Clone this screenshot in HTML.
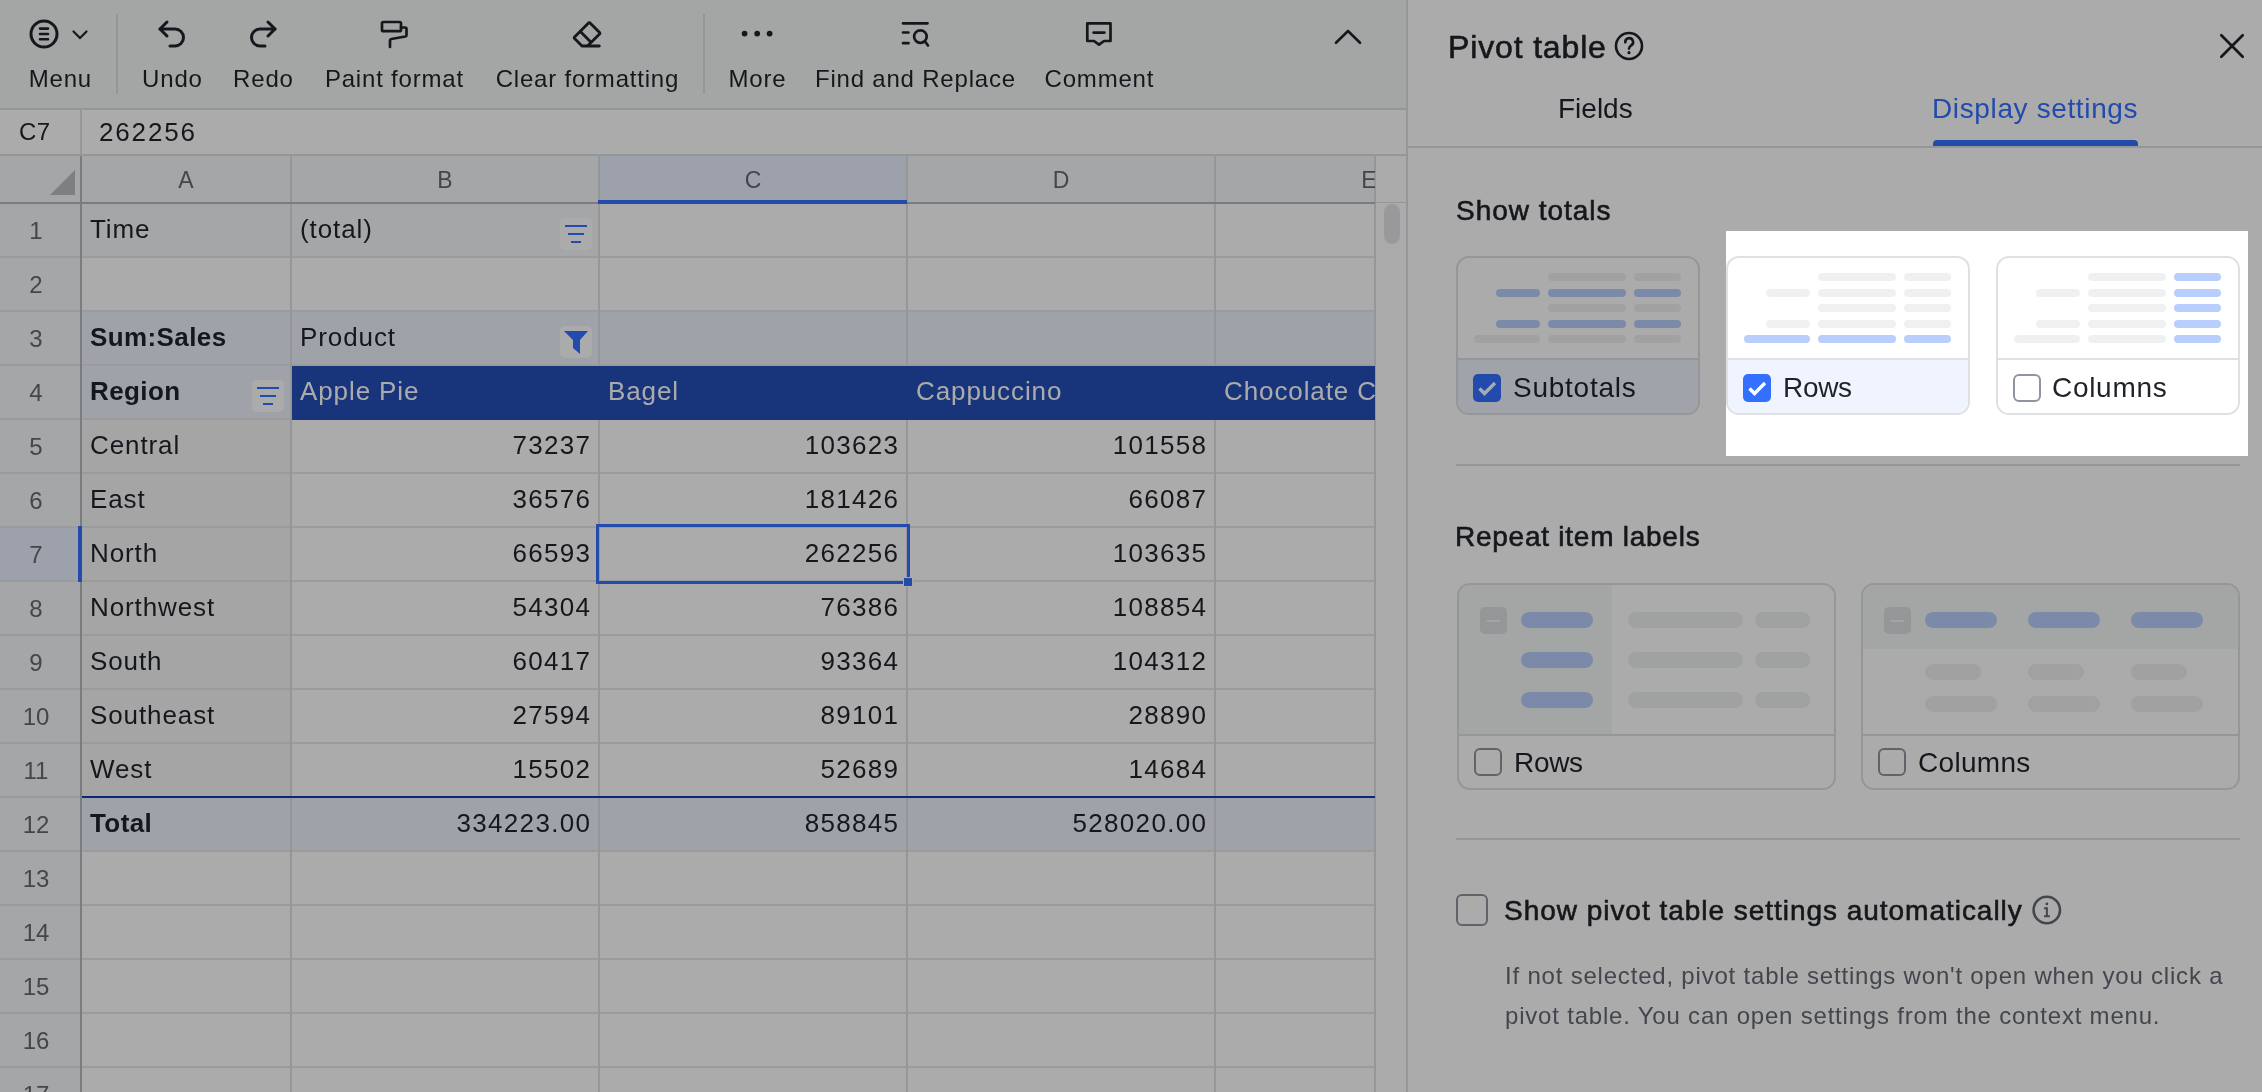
<!DOCTYPE html>
<html><head><meta charset="utf-8">
<style>
*{box-sizing:border-box;margin:0;padding:0}
html,body{width:2262px;height:1092px;overflow:hidden;background:#fff;font-family:"Liberation Sans",sans-serif;color:#1f2329}
.a{position:absolute}
.t{position:absolute;white-space:nowrap;line-height:1;will-change:transform}
.hl{position:absolute;background:#dee0e3}
svg{position:absolute;overflow:visible}
</style></head><body>

<div class="a" id="sheet" style="left:0;top:0;width:1407px;height:1092px;background:#fff;overflow:hidden">
<div id="toolbar"><div class="a" style="left:0;top:0;width:1407px;height:109px;background:#f5f6f7"></div>
    <!-- menu -->
    <svg style="left:0;top:0" width="1" height="1">
      <circle cx="44" cy="34" r="13" fill="none" stroke="#1f2329" stroke-width="3"/>
      <path d="M40 28.6H48M40 34H48M40 39.3H48" stroke="#1f2329" stroke-width="2.6" stroke-linecap="round"/>
      <path d="M73.5 31.5L80 38L86.5 31.5" fill="none" stroke="#1f2329" stroke-width="2.2" stroke-linecap="round"/>
    </svg>
    <div class="t" style="left:-89.80px;top:67px;width:300px;text-align:center;font-size:24px;letter-spacing:0.8px;text-indent:0.8px">Menu</div>
    <div class="hl" style="left:116px;top:14px;width:2px;height:80px"></div>
    <!-- undo -->
    <svg style="left:0;top:0" width="1" height="1">
      <path d="M167 22L160 29L167 36" fill="none" stroke="#1f2329" stroke-width="3" stroke-linecap="round" stroke-linejoin="round"/>
      <path d="M160 29H175A8.5 8.5 0 0 1 175 46H170" fill="none" stroke="#1f2329" stroke-width="3" stroke-linecap="round"/>
    </svg>
    <div class="t" style="left:22.25px;top:67px;width:300px;text-align:center;font-size:24px;letter-spacing:0.8px;text-indent:0.8px">Undo</div>
    <!-- redo -->
    <svg style="left:0;top:0" width="1" height="1">
      <path d="M268 22L275 29L268 36" fill="none" stroke="#1f2329" stroke-width="3" stroke-linecap="round" stroke-linejoin="round"/>
      <path d="M275 29H260A8.5 8.5 0 0 0 260 46H265" fill="none" stroke="#1f2329" stroke-width="3" stroke-linecap="round"/>
    </svg>
    <div class="t" style="left:113.45px;top:67px;width:300px;text-align:center;font-size:24px;letter-spacing:0.8px;text-indent:0.8px">Redo</div>
    <!-- paint format -->
    <svg style="left:0;top:0" width="1" height="1">
      <rect x="382" y="22" width="19" height="9.2" rx="1.5" fill="none" stroke="#1f2329" stroke-width="2.7"/>
      <path d="M401 27.5H405A1.5 1.5 0 0 1 406.5 29V35A1.5 1.5 0 0 1 405.3 36.5L391.3 39A1.5 1.5 0 0 0 390 40.5V47" fill="none" stroke="#1f2329" stroke-width="2.7" stroke-linecap="round" stroke-linejoin="round"/>
    </svg>
    <div class="t" style="left:243.75px;top:67px;width:300px;text-align:center;font-size:24px;letter-spacing:0.8px;text-indent:0.8px">Paint format</div>
    <!-- clear formatting -->
    <svg style="left:0;top:0" width="1" height="1">
      <path d="M582 46L574.3 38.3A1 1 0 0 1 574.3 37.3L588.8 22.8A1 1 0 0 1 589.8 22.8L599.8 32.8A1 1 0 0 1 599.8 33.8L587.5 46" fill="none" stroke="#1f2329" stroke-width="2.8" stroke-linejoin="round"/>
      <path d="M580.6 31.8L591 42.2M582 46H599.3" fill="none" stroke="#1f2329" stroke-width="2.8" stroke-linecap="round"/>
    </svg>
    <div class="t" style="left:437.00px;top:67px;width:300px;text-align:center;font-size:24px;letter-spacing:0.8px;text-indent:0.8px">Clear formatting</div>
    <div class="hl" style="left:703px;top:14px;width:2px;height:80px"></div>
    <!-- more -->
    <svg style="left:0;top:0" width="1" height="1">
      <circle cx="744.6" cy="33.6" r="2.9" fill="#1f2329"/>
      <circle cx="757.2" cy="33.6" r="2.9" fill="#1f2329"/>
      <circle cx="769.6" cy="33.6" r="2.9" fill="#1f2329"/>
    </svg>
    <div class="t" style="left:607.45px;top:67px;width:300px;text-align:center;font-size:24px;letter-spacing:0.8px;text-indent:0.8px">More</div>
    <!-- find replace -->
    <svg style="left:0;top:0" width="1" height="1">
      <path d="M903 23.3H927.5M903 32.5H908.5M903 43.2H908.5" stroke="#1f2329" stroke-width="2.7" stroke-linecap="round"/>
      <circle cx="920.4" cy="36.6" r="6.3" fill="none" stroke="#1f2329" stroke-width="2.7"/>
      <path d="M925 41.5L928 45.5" stroke="#1f2329" stroke-width="2.7" stroke-linecap="round"/>
    </svg>
    <div class="t" style="left:765.40px;top:67px;width:300px;text-align:center;font-size:24px;letter-spacing:0.8px;text-indent:0.8px">Find and Replace</div>
    <!-- comment -->
    <svg style="left:0;top:0" width="1" height="1">
      <path d="M1087.3 23.3H1110.5V41H1104L1099 44.6L1094 41H1087.3Z" fill="none" stroke="#1f2329" stroke-width="2.7" stroke-linejoin="round"/>
      <path d="M1093.6 32.6H1104.4" stroke="#1f2329" stroke-width="2.7" stroke-linecap="round"/>
    </svg>
    <div class="t" style="left:949.00px;top:67px;width:300px;text-align:center;font-size:24px;letter-spacing:0.8px;text-indent:0.8px">Comment</div>
    <!-- collapse -->
    <svg style="left:0;top:0" width="1" height="1">
      <path d="M1336 42.8L1348 31L1360 42.8" fill="none" stroke="#1f2329" stroke-width="2.6" stroke-linecap="round" stroke-linejoin="round"/>
    </svg>
    <div class="hl" style="left:0;top:108px;width:1407px;height:2px"></div>
  </div>

  <!-- formula bar -->
  <div class="t" style="left:19px;top:120px;font-size:24px;letter-spacing:0.5px">C7</div>
  <div class="hl" style="left:80px;top:110px;width:2px;height:44px"></div>
  <div class="t" style="left:99px;top:119px;font-size:26px;letter-spacing:1.85px">262256</div>
  <div class="hl" style="left:0;top:154px;width:1407px;height:2px"></div>

  
<div class="a" style="left:0px;top:156px;width:1375px;height:47px;background:#f7f8f9"></div>
<div class="a" style="left:599px;top:156px;width:308px;height:47px;background:#ebf1ff"></div>
<div class="a" style="left:0px;top:203px;width:81px;height:889px;background:#f7f8f9"></div>
<div class="a" style="left:0px;top:527px;width:81px;height:54px;background:#ebf1ff"></div>
<div class="a" style="left:81px;top:203px;width:518px;height:54px;background:#f7f8f9"></div>
<div class="a" style="left:81px;top:311px;width:1294px;height:54px;background:#edf2fd"></div>
<div class="a" style="left:81px;top:365px;width:210px;height:54px;background:#edf2fd"></div>
<div class="a" style="left:81px;top:419px;width:210px;height:378px;background:#f6f7f8"></div>
<div class="a" style="left:81px;top:797px;width:1294px;height:54px;background:#edf2fd"></div>
<div class="a" style="left:0px;top:256px;width:1375px;height:2px;background:#e6e8e8"></div>
<div class="a" style="left:0px;top:310px;width:1375px;height:2px;background:#e6e8e8"></div>
<div class="a" style="left:0px;top:364px;width:1375px;height:2px;background:#e6e8e8"></div>
<div class="a" style="left:0px;top:418px;width:1375px;height:2px;background:#e6e8e8"></div>
<div class="a" style="left:0px;top:472px;width:1375px;height:2px;background:#e6e8e8"></div>
<div class="a" style="left:0px;top:526px;width:1375px;height:2px;background:#e6e8e8"></div>
<div class="a" style="left:0px;top:580px;width:1375px;height:2px;background:#e6e8e8"></div>
<div class="a" style="left:0px;top:634px;width:1375px;height:2px;background:#e6e8e8"></div>
<div class="a" style="left:0px;top:688px;width:1375px;height:2px;background:#e6e8e8"></div>
<div class="a" style="left:0px;top:742px;width:1375px;height:2px;background:#e6e8e8"></div>
<div class="a" style="left:0px;top:796px;width:1375px;height:2px;background:#e6e8e8"></div>
<div class="a" style="left:0px;top:850px;width:1375px;height:2px;background:#e6e8e8"></div>
<div class="a" style="left:0px;top:904px;width:1375px;height:2px;background:#e6e8e8"></div>
<div class="a" style="left:0px;top:958px;width:1375px;height:2px;background:#e6e8e8"></div>
<div class="a" style="left:0px;top:1012px;width:1375px;height:2px;background:#e6e8e8"></div>
<div class="a" style="left:0px;top:1066px;width:1375px;height:2px;background:#e6e8e8"></div>
<div class="a" style="left:0px;top:1120px;width:1375px;height:2px;background:#e6e8e8"></div>
<div class="a" style="left:290px;top:156px;width:2px;height:936px;background:#dee0e3"></div>
<div class="a" style="left:598px;top:156px;width:2px;height:936px;background:#dee0e3"></div>
<div class="a" style="left:906px;top:156px;width:2px;height:936px;background:#dee0e3"></div>
<div class="a" style="left:1214px;top:156px;width:2px;height:936px;background:#dee0e3"></div>
<div class="a" style="left:1374px;top:156px;width:2px;height:936px;background:#dee0e3"></div>
<div class="a" style="left:0px;top:202px;width:1375px;height:2px;background:#b8babe"></div>
<div class="a" style="left:80px;top:156px;width:2px;height:936px;background:#b8babe"></div>
<div class="a" style="left:292px;top:366px;width:1083px;height:54px;background:#244eb7"></div>
<div class="a" style="left:598px;top:200px;width:309px;height:4px;background:#3370ff"></div>
<div class="a" style="left:78px;top:526px;width:4px;height:56px;background:#3370ff"></div>
<div class="a" style="left:82px;top:796px;width:1293px;height:2px;background:#0f3cb4"></div>
<svg style="left:0;top:0" width="1" height="1"><path d="M50 195H75V170Z" fill="#bbbfc4"/></svg>
<div class="t" style="left:81px;top:169px;width:210px;font-size:23px;color:#646a73;text-align:center">A</div>
<div class="t" style="left:291px;top:169px;width:308px;font-size:23px;color:#646a73;text-align:center">B</div>
<div class="t" style="left:599px;top:169px;width:308px;font-size:23px;color:#646a73;text-align:center">C</div>
<div class="t" style="left:907px;top:169px;width:308px;font-size:23px;color:#646a73;text-align:center">D</div>
<div class="t" style="left:1215px;top:169px;width:308px;font-size:23px;color:#646a73;text-align:center;">E</div>
<div class="t" style="left:0;top:219px;width:72px;font-size:24px;color:#646a73;text-align:center">1</div>
<div class="t" style="left:0;top:273px;width:72px;font-size:24px;color:#646a73;text-align:center">2</div>
<div class="t" style="left:0;top:327px;width:72px;font-size:24px;color:#646a73;text-align:center">3</div>
<div class="t" style="left:0;top:381px;width:72px;font-size:24px;color:#646a73;text-align:center">4</div>
<div class="t" style="left:0;top:435px;width:72px;font-size:24px;color:#646a73;text-align:center">5</div>
<div class="t" style="left:0;top:489px;width:72px;font-size:24px;color:#646a73;text-align:center">6</div>
<div class="t" style="left:0;top:543px;width:72px;font-size:24px;color:#646a73;text-align:center">7</div>
<div class="t" style="left:0;top:597px;width:72px;font-size:24px;color:#646a73;text-align:center">8</div>
<div class="t" style="left:0;top:651px;width:72px;font-size:24px;color:#646a73;text-align:center">9</div>
<div class="t" style="left:0;top:705px;width:72px;font-size:24px;color:#646a73;text-align:center">10</div>
<div class="t" style="left:0;top:759px;width:72px;font-size:24px;color:#646a73;text-align:center">11</div>
<div class="t" style="left:0;top:813px;width:72px;font-size:24px;color:#646a73;text-align:center">12</div>
<div class="t" style="left:0;top:867px;width:72px;font-size:24px;color:#646a73;text-align:center">13</div>
<div class="t" style="left:0;top:921px;width:72px;font-size:24px;color:#646a73;text-align:center">14</div>
<div class="t" style="left:0;top:975px;width:72px;font-size:24px;color:#646a73;text-align:center">15</div>
<div class="t" style="left:0;top:1029px;width:72px;font-size:24px;color:#646a73;text-align:center">16</div>
<div class="t" style="left:0;top:1083px;width:72px;font-size:24px;color:#646a73;text-align:center">17</div>
<div class="t" style="left:90px;top:216px;font-size:26px;letter-spacing:0.9px">Time</div>
<div class="t" style="left:300px;top:216px;font-size:26px;letter-spacing:0.9px">(total)</div>
<div class="t" style="left:90px;top:324px;font-size:26px;font-weight:bold;letter-spacing:0.4px">Sum:Sales</div>
<div class="t" style="left:300px;top:324px;font-size:26px;letter-spacing:0.9px">Product</div>
<div class="t" style="left:90px;top:378px;font-size:26px;font-weight:bold;letter-spacing:0.4px">Region</div>
<div class="t" style="left:300px;top:378px;font-size:26px;color:#ffffff;letter-spacing:0.9px">Apple Pie</div>
<div class="t" style="left:608px;top:378px;font-size:26px;color:#ffffff;letter-spacing:0.9px">Bagel</div>
<div class="t" style="left:916px;top:378px;font-size:26px;color:#ffffff;letter-spacing:0.9px">Cappuccino</div>
<div class="t" style="left:1224px;top:378px;font-size:26px;color:#ffffff;letter-spacing:0.9px">Chocolate Chip</div>
<div class="t" style="left:90px;top:432px;font-size:26px;letter-spacing:0.9px">Central</div>
<div class="t" style="left:291px;top:432px;width:300.2px;text-align:right;font-size:26px;letter-spacing:1.3px">73237</div>
<div class="t" style="left:599px;top:432px;width:300.2px;text-align:right;font-size:26px;letter-spacing:1.3px">103623</div>
<div class="t" style="left:907px;top:432px;width:300.2px;text-align:right;font-size:26px;letter-spacing:1.3px">101558</div>
<div class="t" style="left:90px;top:486px;font-size:26px;letter-spacing:0.9px">East</div>
<div class="t" style="left:291px;top:486px;width:300.2px;text-align:right;font-size:26px;letter-spacing:1.3px">36576</div>
<div class="t" style="left:599px;top:486px;width:300.2px;text-align:right;font-size:26px;letter-spacing:1.3px">181426</div>
<div class="t" style="left:907px;top:486px;width:300.2px;text-align:right;font-size:26px;letter-spacing:1.3px">66087</div>
<div class="t" style="left:90px;top:540px;font-size:26px;letter-spacing:0.9px">North</div>
<div class="t" style="left:291px;top:540px;width:300.2px;text-align:right;font-size:26px;letter-spacing:1.3px">66593</div>
<div class="t" style="left:599px;top:540px;width:300.2px;text-align:right;font-size:26px;letter-spacing:1.3px">262256</div>
<div class="t" style="left:907px;top:540px;width:300.2px;text-align:right;font-size:26px;letter-spacing:1.3px">103635</div>
<div class="t" style="left:90px;top:594px;font-size:26px;letter-spacing:0.9px">Northwest</div>
<div class="t" style="left:291px;top:594px;width:300.2px;text-align:right;font-size:26px;letter-spacing:1.3px">54304</div>
<div class="t" style="left:599px;top:594px;width:300.2px;text-align:right;font-size:26px;letter-spacing:1.3px">76386</div>
<div class="t" style="left:907px;top:594px;width:300.2px;text-align:right;font-size:26px;letter-spacing:1.3px">108854</div>
<div class="t" style="left:90px;top:648px;font-size:26px;letter-spacing:0.9px">South</div>
<div class="t" style="left:291px;top:648px;width:300.2px;text-align:right;font-size:26px;letter-spacing:1.3px">60417</div>
<div class="t" style="left:599px;top:648px;width:300.2px;text-align:right;font-size:26px;letter-spacing:1.3px">93364</div>
<div class="t" style="left:907px;top:648px;width:300.2px;text-align:right;font-size:26px;letter-spacing:1.3px">104312</div>
<div class="t" style="left:90px;top:702px;font-size:26px;letter-spacing:0.9px">Southeast</div>
<div class="t" style="left:291px;top:702px;width:300.2px;text-align:right;font-size:26px;letter-spacing:1.3px">27594</div>
<div class="t" style="left:599px;top:702px;width:300.2px;text-align:right;font-size:26px;letter-spacing:1.3px">89101</div>
<div class="t" style="left:907px;top:702px;width:300.2px;text-align:right;font-size:26px;letter-spacing:1.3px">28890</div>
<div class="t" style="left:90px;top:756px;font-size:26px;letter-spacing:0.9px">West</div>
<div class="t" style="left:291px;top:756px;width:300.2px;text-align:right;font-size:26px;letter-spacing:1.3px">15502</div>
<div class="t" style="left:599px;top:756px;width:300.2px;text-align:right;font-size:26px;letter-spacing:1.3px">52689</div>
<div class="t" style="left:907px;top:756px;width:300.2px;text-align:right;font-size:26px;letter-spacing:1.3px">14684</div>
<div class="t" style="left:90px;top:810px;font-size:26px;font-weight:bold;letter-spacing:0.4px">Total</div>
<div class="t" style="left:291px;top:810px;width:300.2px;text-align:right;font-size:26px;letter-spacing:1.3px">334223.00</div>
<div class="t" style="left:599px;top:810px;width:300.2px;text-align:right;font-size:26px;letter-spacing:1.3px">858845</div>
<div class="t" style="left:907px;top:810px;width:300.2px;text-align:right;font-size:26px;letter-spacing:1.3px">528020.00</div>
<div class="a" style="left:560px;top:218px;width:32px;height:32px;background:#ffffff;border-radius:5px"></div>
<svg style="left:0;top:0" width="1" height="1"><path d="M565 226H587M568 234H584M571 242H581" stroke="#3370ff" stroke-width="2.2"/></svg>
<div class="a" style="left:560px;top:326px;width:32px;height:32px;background:#ffffff;border-radius:5px"></div>
<svg style="left:0;top:0" width="1" height="1"><path d="M564 331H588L580 340V354L573 348V340Z" fill="#3370ff"/></svg>
<div class="a" style="left:252px;top:380px;width:32px;height:32px;background:#ffffff;border-radius:5px"></div>
<svg style="left:0;top:0" width="1" height="1"><path d="M257 388H279M260 396H276M263 404H273" stroke="#3370ff" stroke-width="2.2"/></svg>
<div class="a" style="left:596px;top:524px;width:314px;height:60px;border:3.5px solid #3370ff"></div>
<div class="a" style="left:904px;top:578px;width:8px;height:8px;background:#3370ff;outline:1.5px solid #fff"></div>
<div class="a" style="left:1375px;top:156px;width:32px;height:936px;background:#ffffff"></div>
<div class="a" style="left:1375px;top:156px;width:1px;height:936px;background:#dee0e3"></div>
<div class="a" style="left:1375px;top:202px;width:32px;height:1px;background:#dee0e3"></div>
<div class="a" style="left:1384px;top:204px;width:16px;height:40px;background:#e4e5e8;border-radius:8px"></div>
</div>
<div class="a" id="panel" style="left:1407px;top:0;width:855px;height:1092px;background:#fff"></div>
<div class="a" style="left:1406px;top:0;width:2px;height:1092px;background:#dee0e3"></div>
<!-- title -->
<div class="t" style="left:1448px;top:31px;font-size:32px;-webkit-text-stroke:0.6px #1f2329;letter-spacing:0.85px">Pivot table</div>
<svg style="left:0;top:0" width="1" height="1">
  <circle cx="1629" cy="46" r="13" fill="none" stroke="#1f2329" stroke-width="2.6"/>
  <path d="M1625.3 42.3A3.9 3.9 0 1 1 1631.3 45.3C1629.8 46.4 1629 47.2 1629 48.6" fill="none" stroke="#1f2329" stroke-width="2.6" stroke-linecap="round"/>
  <circle cx="1629" cy="52.7" r="1.6" fill="#1f2329"/>
</svg>
<svg style="left:0;top:0" width="1" height="1">
  <path d="M2221.3 35.3L2242.7 56.7M2242.7 35.3L2221.3 56.7" stroke="#1f2329" stroke-width="2.7" stroke-linecap="round"/>
</svg>
<!-- tabs -->
<div class="t" style="left:1558px;top:95px;font-size:28px">Fields</div>
<div class="t" style="left:1932px;top:95px;font-size:28px;color:#3370ff;letter-spacing:0.63px">Display settings</div>
<div class="a" style="left:1933px;top:140px;width:205px;height:7px;background:#3370ff;border-radius:4px 4px 0 0"></div>
<div class="a" style="left:1408px;top:146px;width:854px;height:2px;background:#dee0e3"></div>

<!-- show totals -->
<div class="t" style="left:1456px;top:197px;font-size:28px;-webkit-text-stroke:0.6px #1f2329;letter-spacing:0.98px">Show totals</div>
<div class="a" style="left:1456px;top:256px;width:244px;height:159px;border:2px solid #dee0e3;border-radius:13px;background:#fff;overflow:hidden"><div class="a" style="left:0;top:100px;width:244px;height:59px;background:#f0f4ff;border-top:2px solid #dee0e3"></div></div><div class="a" style="left:1548px;top:273px;width:78px;height:8px;background:#eff0f1;border-radius:4px"></div><div class="a" style="left:1634px;top:273px;width:47px;height:8px;background:#eff0f1;border-radius:4px"></div><div class="a" style="left:1495.5px;top:288.6px;width:44.5px;height:8px;background:#bacefd;border-radius:4px"></div><div class="a" style="left:1548px;top:288.6px;width:78px;height:8px;background:#bacefd;border-radius:4px"></div><div class="a" style="left:1634px;top:288.6px;width:47px;height:8px;background:#bacefd;border-radius:4px"></div><div class="a" style="left:1548px;top:304.2px;width:78px;height:8px;background:#eff0f1;border-radius:4px"></div><div class="a" style="left:1634px;top:304.2px;width:47px;height:8px;background:#eff0f1;border-radius:4px"></div><div class="a" style="left:1495.5px;top:319.8px;width:44.5px;height:8px;background:#bacefd;border-radius:4px"></div><div class="a" style="left:1548px;top:319.8px;width:78px;height:8px;background:#bacefd;border-radius:4px"></div><div class="a" style="left:1634px;top:319.8px;width:47px;height:8px;background:#bacefd;border-radius:4px"></div><div class="a" style="left:1473.8px;top:335.4px;width:66.2px;height:8px;background:#eff0f1;border-radius:4px"></div><div class="a" style="left:1548px;top:335.4px;width:78px;height:8px;background:#eff0f1;border-radius:4px"></div><div class="a" style="left:1634px;top:335.4px;width:47px;height:8px;background:#eff0f1;border-radius:4px"></div><div class="a" style="left:1473px;top:374px;width:28px;height:28px;background:#3370ff;border-radius:5px"></div><svg style="left:0;top:0" width="1" height="1"><path d="M1479.5 388.5L1484.5 393.5L1495 383" fill="none" stroke="#fff" stroke-width="3.4"/></svg><div class="t" style="left:1513px;top:374px;font-size:28px;letter-spacing:0.75px">Subtotals</div><div class="a" style="left:1726px;top:256px;width:244px;height:159px;border:2px solid #dee0e3;border-radius:13px;background:#fff;overflow:hidden"><div class="a" style="left:0;top:100px;width:244px;height:59px;background:#f0f4ff;border-top:2px solid #dee0e3"></div></div><div class="a" style="left:1818px;top:273px;width:78px;height:8px;background:#eff0f1;border-radius:4px"></div><div class="a" style="left:1904px;top:273px;width:47px;height:8px;background:#eff0f1;border-radius:4px"></div><div class="a" style="left:1765.5px;top:288.6px;width:44.5px;height:8px;background:#eff0f1;border-radius:4px"></div><div class="a" style="left:1818px;top:288.6px;width:78px;height:8px;background:#eff0f1;border-radius:4px"></div><div class="a" style="left:1904px;top:288.6px;width:47px;height:8px;background:#eff0f1;border-radius:4px"></div><div class="a" style="left:1818px;top:304.2px;width:78px;height:8px;background:#eff0f1;border-radius:4px"></div><div class="a" style="left:1904px;top:304.2px;width:47px;height:8px;background:#eff0f1;border-radius:4px"></div><div class="a" style="left:1765.5px;top:319.8px;width:44.5px;height:8px;background:#eff0f1;border-radius:4px"></div><div class="a" style="left:1818px;top:319.8px;width:78px;height:8px;background:#eff0f1;border-radius:4px"></div><div class="a" style="left:1904px;top:319.8px;width:47px;height:8px;background:#eff0f1;border-radius:4px"></div><div class="a" style="left:1743.8px;top:335.4px;width:66.2px;height:8px;background:#bacefd;border-radius:4px"></div><div class="a" style="left:1818px;top:335.4px;width:78px;height:8px;background:#bacefd;border-radius:4px"></div><div class="a" style="left:1904px;top:335.4px;width:47px;height:8px;background:#bacefd;border-radius:4px"></div><div class="a" style="left:1743px;top:374px;width:28px;height:28px;background:#3370ff;border-radius:5px"></div><svg style="left:0;top:0" width="1" height="1"><path d="M1749.5 388.5L1754.5 393.5L1765 383" fill="none" stroke="#fff" stroke-width="3.4"/></svg><div class="t" style="left:1783px;top:374px;font-size:28px;letter-spacing:-0.3px">Rows</div><div class="a" style="left:1996px;top:256px;width:244px;height:159px;border:2px solid #dee0e3;border-radius:13px;background:#fff;overflow:hidden"><div class="a" style="left:0;top:100px;width:244px;height:59px;background:#fff;border-top:2px solid #dee0e3"></div></div><div class="a" style="left:2088px;top:273px;width:78px;height:8px;background:#eff0f1;border-radius:4px"></div><div class="a" style="left:2174px;top:273px;width:47px;height:8px;background:#bacefd;border-radius:4px"></div><div class="a" style="left:2035.5px;top:288.6px;width:44.5px;height:8px;background:#eff0f1;border-radius:4px"></div><div class="a" style="left:2088px;top:288.6px;width:78px;height:8px;background:#eff0f1;border-radius:4px"></div><div class="a" style="left:2174px;top:288.6px;width:47px;height:8px;background:#bacefd;border-radius:4px"></div><div class="a" style="left:2088px;top:304.2px;width:78px;height:8px;background:#eff0f1;border-radius:4px"></div><div class="a" style="left:2174px;top:304.2px;width:47px;height:8px;background:#bacefd;border-radius:4px"></div><div class="a" style="left:2035.5px;top:319.8px;width:44.5px;height:8px;background:#eff0f1;border-radius:4px"></div><div class="a" style="left:2088px;top:319.8px;width:78px;height:8px;background:#eff0f1;border-radius:4px"></div><div class="a" style="left:2174px;top:319.8px;width:47px;height:8px;background:#bacefd;border-radius:4px"></div><div class="a" style="left:2013.8px;top:335.4px;width:66.2px;height:8px;background:#eff0f1;border-radius:4px"></div><div class="a" style="left:2088px;top:335.4px;width:78px;height:8px;background:#eff0f1;border-radius:4px"></div><div class="a" style="left:2174px;top:335.4px;width:47px;height:8px;background:#bacefd;border-radius:4px"></div><div class="a" style="left:2013px;top:374px;width:28px;height:28px;border:2.4px solid #8f959e;border-radius:6px;background:#fff"></div><div class="t" style="left:2052px;top:374px;font-size:28px;letter-spacing:0.7px">Columns</div>
<div class="a" style="left:1456px;top:464px;width:784px;height:2px;background:#dee0e3"></div>

<!-- repeat labels -->
<div class="t" style="left:1455px;top:523px;font-size:28px;-webkit-text-stroke:0.6px #1f2329;letter-spacing:0.75px">Repeat item labels</div>
<div class="a" style="left:1457px;top:583px;width:379px;height:207px;border:2px solid #dee0e3;border-radius:13px;background:#fff;overflow:hidden"><div class="a" style="left:0px;top:0px;width:153px;height:149px;background:#f5f6f7"></div><div class="a" style="left:0;top:149px;width:379px;height:2px;background:#dee0e3"></div></div><div class="a" style="left:1480px;top:607px;width:27px;height:27px;background:#dee0e3;border-radius:5px"></div><div class="a" style="left:1487px;top:619.5px;width:13px;height:2.5px;background:#f5f6f7"></div><div class="a" style="left:1521px;top:612px;width:72px;height:16px;background:#bacefd;border-radius:8px"></div><div class="a" style="left:1628px;top:612px;width:115px;height:16px;background:#eff0f1;border-radius:8px"></div><div class="a" style="left:1755px;top:612px;width:55px;height:16px;background:#eff0f1;border-radius:8px"></div><div class="a" style="left:1521px;top:652px;width:72px;height:16px;background:#bacefd;border-radius:8px"></div><div class="a" style="left:1628px;top:652px;width:115px;height:16px;background:#eff0f1;border-radius:8px"></div><div class="a" style="left:1755px;top:652px;width:55px;height:16px;background:#eff0f1;border-radius:8px"></div><div class="a" style="left:1521px;top:691.5px;width:72px;height:16px;background:#bacefd;border-radius:8px"></div><div class="a" style="left:1628px;top:691.5px;width:115px;height:16px;background:#eff0f1;border-radius:8px"></div><div class="a" style="left:1755px;top:691.5px;width:55px;height:16px;background:#eff0f1;border-radius:8px"></div><div class="a" style="left:1474px;top:748px;width:28px;height:28px;border:2.4px solid #8f959e;border-radius:6px;background:#fff"></div><div class="t" style="left:1514px;top:749px;font-size:28px;letter-spacing:-0.3px">Rows</div><div class="a" style="left:1861px;top:583px;width:379px;height:207px;border:2px solid #dee0e3;border-radius:13px;background:#fff;overflow:hidden"><div class="a" style="left:0px;top:0px;width:379px;height:64px;background:#f5f6f7"></div><div class="a" style="left:0;top:149px;width:379px;height:2px;background:#dee0e3"></div></div><div class="a" style="left:1884px;top:607px;width:27px;height:27px;background:#dee0e3;border-radius:5px"></div><div class="a" style="left:1891px;top:619.5px;width:13px;height:2.5px;background:#f5f6f7"></div><div class="a" style="left:1925px;top:612px;width:72px;height:16px;background:#bacefd;border-radius:8px"></div><div class="a" style="left:1925px;top:664px;width:55.5px;height:16px;background:#eff0f1;border-radius:8px"></div><div class="a" style="left:1925px;top:695.5px;width:72px;height:16px;background:#eff0f1;border-radius:8px"></div><div class="a" style="left:2028px;top:612px;width:72px;height:16px;background:#bacefd;border-radius:8px"></div><div class="a" style="left:2028px;top:664px;width:55.5px;height:16px;background:#eff0f1;border-radius:8px"></div><div class="a" style="left:2028px;top:695.5px;width:72px;height:16px;background:#eff0f1;border-radius:8px"></div><div class="a" style="left:2131px;top:612px;width:72px;height:16px;background:#bacefd;border-radius:8px"></div><div class="a" style="left:2131px;top:664px;width:55.5px;height:16px;background:#eff0f1;border-radius:8px"></div><div class="a" style="left:2131px;top:695.5px;width:72px;height:16px;background:#eff0f1;border-radius:8px"></div><div class="a" style="left:1878px;top:748px;width:28px;height:28px;border:2.4px solid #8f959e;border-radius:6px;background:#fff"></div><div class="t" style="left:1918px;top:749px;font-size:28px;letter-spacing:0.3px">Columns</div>
<div class="a" style="left:1456px;top:838px;width:784px;height:2px;background:#dee0e3"></div>

<!-- auto -->
<div class="a" style="left:1456px;top:894px;width:32px;height:32px;border:2.5px solid #8f959e;border-radius:6px;background:#fff"></div>
<div class="t" style="left:1504px;top:897px;font-size:28px;-webkit-text-stroke:0.6px #1f2329;letter-spacing:0.97px">Show pivot table settings automatically</div>
<svg style="left:0;top:0" width="1" height="1">
  <circle cx="2046.8" cy="910" r="13.2" fill="none" stroke="#646a73" stroke-width="2.6"/>
  <path d="M2044 908.2H2046.9V916.3M2044 916.3H2049.9" fill="none" stroke="#646a73" stroke-width="2"/>
  <circle cx="2046.9" cy="903.9" r="1.4" fill="#646a73"/>
</svg>
<div class="t" style="left:1505px;top:964px;font-size:24px;letter-spacing:0.8px;color:#646a73">If not selected, pivot table settings won't open when you click a</div>
<div class="t" style="left:1505px;top:1004px;font-size:24px;letter-spacing:0.8px;color:#646a73">pivot table. You can open settings from the context menu.</div>

<div class="a" style="left:1726px;top:231px;width:522px;height:225px;box-shadow:0 0 0 4000px rgba(0,0,0,0.33)"></div>
</body></html>
